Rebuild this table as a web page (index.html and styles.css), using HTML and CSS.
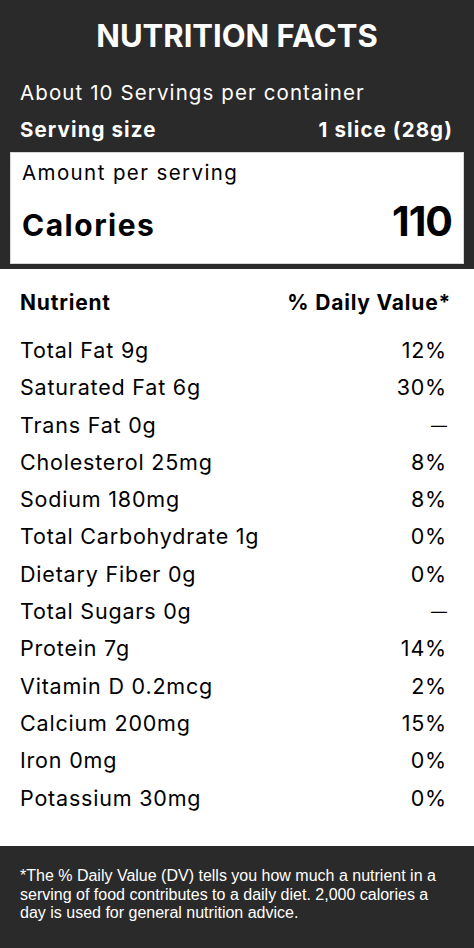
FILE: index.html
```html
<!DOCTYPE html>
<html lang="en">
<head>
    <meta charset="UTF-8">
    <meta name="viewport" content="width=device-width, initial-scale=1.0">
    <title>Nutrition Facts</title>
    <link rel="stylesheet" href="styles.css">
</head>
<body>
    <!-- Cabecera oscura -->
    <div class="top">
        <h1>NUTRITION FACTS</h1>
        <p class="servings">About 10 Servings per container</p>
        <div class="row serving-size">
            <span>Serving size</span>
            <span>1 slice (28g)</span>
        </div>

        <!-- Caja de calorías -->
        <div class="calories-box">
            <p class="amount">Amount per serving</p>
            <div class="row calories">
                <span>Calories</span>
                <span class="kcal">110</span>
            </div>
        </div>
    </div>

    <!-- Lista de nutrientes -->
    <div class="nutrients">
        <div class="row head">
            <span>Nutrient</span>
            <span>% Daily Value*</span>
        </div>
        <ul class="nutrient-list">
            <li><span>Total Fat 9g</span><span>12%</span></li>
            <li><span>Saturated Fat 6g</span><span>30%</span></li>
            <li><span>Trans Fat 0g</span><span class="dash">—</span></li>
            <li><span>Cholesterol 25mg</span><span>8%</span></li>
            <li><span>Sodium 180mg</span><span>8%</span></li>
            <li><span>Total Carbohydrate 1g</span><span>0%</span></li>
            <li><span>Dietary Fiber 0g</span><span>0%</span></li>
            <li><span>Total Sugars 0g</span><span class="dash">—</span></li>
            <li><span>Protein 7g</span><span>14%</span></li>
            <li><span>Vitamin D 0.2mcg</span><span>2%</span></li>
            <li><span>Calcium 200mg</span><span>15%</span></li>
            <li><span>Iron 0mg</span><span>0%</span></li>
            <li><span>Potassium 30mg</span><span>0%</span></li>
        </ul>
    </div>

    <!-- Nota al pie -->
    <div class="footnote">
        <p>*The % Daily Value (DV) tells you how much a nutrient in a serving of food contributes to a daily diet. 2,000 calories a day is used for general nutrition advice.</p>
    </div>
</body>
</html>
```

FILE: styles.css
```css
body {
    font-family: Inter, "Noto Sans", sans-serif;
    margin: 0;
    padding: 0;
    background-color: #ffffff;
    color: #000;
    width: 474px;
    height: 948px;
    display: flex;
    flex-direction: column;
}

p {
    margin: 0;
}

.row {
    display: flex;
    justify-content: space-between;
    align-items: baseline;
}

/* Cabecera */
.top {
    background-color: #2a2a2a;
    color: #fff;
    padding: 16px 10px 5px;
}
.top h1 {
    margin: 0;
    text-align: center;
    font-size: 31px;
    font-weight: 700;
    line-height: 40px;
}
.servings {
    margin-top: 25px;
    padding: 0 10px;
    font-size: 20.5px;
    letter-spacing: 1.1px;
    line-height: 24px;
}
.serving-size {
    padding: 0 11px 0 10px;
    margin-top: 12px;
    font-size: 20.5px;
    font-weight: 700;
    letter-spacing: 1.1px;
    line-height: 26px;
}

/* Caja de calorías */
.calories-box {
    background-color: #fff;
    color: #000;
    margin-top: 9px;
    padding: 7px 11px 14px;
    border: 1px solid #d8d8d8;
}
.amount {
    font-size: 20.5px;
    letter-spacing: 1.4px;
    line-height: 26px;
}
.calories {
    margin-top: 11px;
    font-weight: 700;
    line-height: 48px;
    font-size: 30px;
    letter-spacing: 1.5px;
}
.calories .kcal {
    font-size: 41px;
    letter-spacing: -1px;
}

/* Nutrientes */
.nutrients {
    flex: 1;
    padding: 21px 23px 0 20px;
}
.head {
    font-size: 21px;
    font-weight: 700;
    letter-spacing: 0.8px;
    line-height: 26px;
}
.nutrient-list {
    list-style: none;
    margin: 16px 4px 0 0;
    padding: 0;
}
.nutrient-list li {
    display: flex;
    justify-content: space-between;
    font-size: 21.5px;
    letter-spacing: 0.8px;
    line-height: 37.3px;
}
.nutrient-list .dash {
    letter-spacing: 0;
    font-size: 16px;
}

/* Nota al pie */
.footnote {
    background-color: #2a2a2a;
    color: #fff;
    height: 102px;
    box-sizing: border-box;
    padding: 21px 30px 0 20px;
    font-family: "Liberation Sans", Arial, sans-serif;
    font-size: 16px;
    line-height: 18.5px;
}
```
